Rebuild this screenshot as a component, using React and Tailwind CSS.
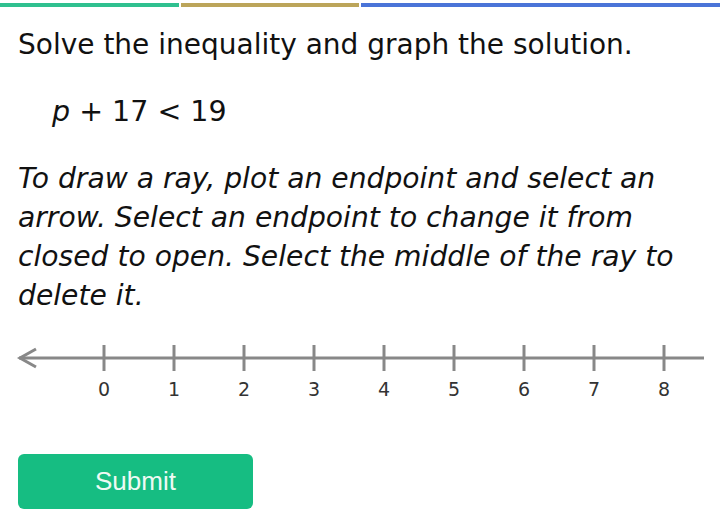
import React from 'react';

const ticks = [0, 1, 2, 3, 4, 5, 6, 7, 8];

export default function App() {
  return (
    <div className="w-[720px] h-[514px] bg-white overflow-hidden" style={{ fontFamily: '"DejaVu Sans", Verdana, sans-serif' }}>
      {/* progress bars */}
      <div className="flex gap-[2px] pt-[3px]">
        <div className="w-[179px] h-[4px] bg-[#2fc08f]" />
        <div className="w-[178px] h-[4px] bg-[#bca55a]" />
        <div className="flex-1 h-[4px] bg-[#4a74d8]" />
      </div>

      <div className="px-[18px]">
        <h1 className="mt-[22px] text-[28px] leading-[32px] text-[#111]">Solve the inequality and graph the solution.</h1>
        <p className="mt-[35px] ml-[34px] text-[28.5px] leading-[32px] text-[#111]">
          <span className="italic">p</span> + 17 &lt; 19
        </p>
        <p className="mt-[31px] text-[28.2px] leading-[39px] italic text-[#111]">
          To draw a ray, plot an endpoint and select an arrow. Select an endpoint to change it from closed to open. Select the middle of the ray to delete it.
        </p>
      </div>

      {/* number line */}
      <svg width="720" height="70" className="mt-[16px] block">
        <line x1="19" y1="27" x2="704" y2="27" stroke="#888" strokeWidth="3" />
        <polyline points="36,18 20,27 36,36" fill="none" stroke="#888" strokeWidth="3" />
        {ticks.map(t => (
          <g key={t}>
            <line x1={104 + t * 70} y1="14" x2={104 + t * 70} y2="40" stroke="#888" strokeWidth="3" />
            <text x={104 + t * 70} y="65" textAnchor="middle" fontSize="19" fill="#333" fontFamily="DejaVu Sans, sans-serif">{t}</text>
          </g>
        ))}
      </svg>

      <div className="px-[18px] mt-[53px]">
        <button className="w-[235px] h-[55px] rounded-[6px] bg-[#16bd82] text-[#eefaf4] text-[26px]" style={{ fontFamily: '"Liberation Sans", Arial, sans-serif' }}>
          Submit
        </button>
      </div>
    </div>
  );
}
